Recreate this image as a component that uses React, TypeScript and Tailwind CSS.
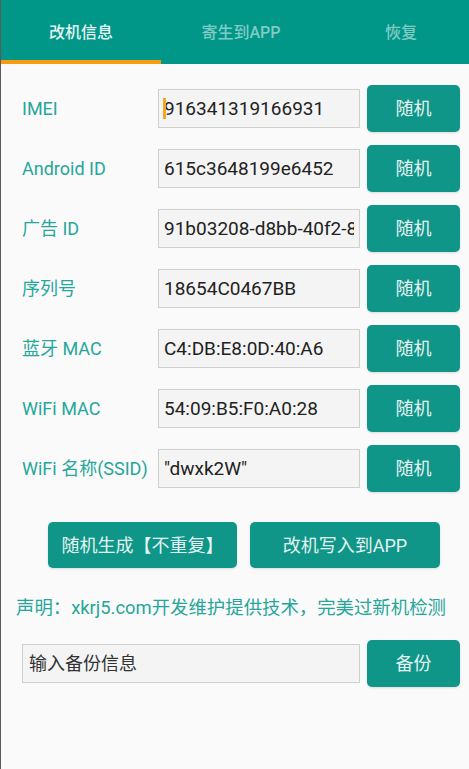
const fields = [
  { label: "IMEI", value: "916341319166931", caret: true },
  { label: "Android ID", value: "615c3648199e6452" },
  { label: "广告 ID", value: "91b03208-d8bb-40f2-8a3c-6f1e2d9b7c45" },
  { label: "序列号", value: "18654C0467BB" },
  { label: "蓝牙 MAC", value: "C4:DB:E8:0D:40:A6" },
  { label: "WiFi MAC", value: "54:09:B5:F0:A0:28" },
  { label: "WiFi 名称(SSID)", value: '"dwxk2W"' },
];

const tabs = ["改机信息", "寄生到APP", "恢复"];

function App() {
  return (
    <div
      className="min-h-[769px] w-[469px] overflow-hidden bg-[#fafafa] border-l border-[#5a5a5a]"
      style={{ fontFamily: 'Roboto, "Noto Sans CJK SC", sans-serif' }}
    >
      {/* tab bar */}
      <div className="flex h-16 bg-[#009688] overflow-hidden">
        {tabs.map((tab, i) => (
          <div
            key={tab}
            className={
              "relative flex h-full w-[160px] shrink-0 items-center justify-center pt-[2px] text-[16px] font-medium " +
              (i === 0 ? "text-[#e6f4f2]" : "text-[#80cbc4]")
            }
          >
            {tab}
            {i === 0 && (
              <span className="absolute bottom-0 left-0 h-1 w-full bg-[#f59c12]" />
            )}
          </div>
        ))}
      </div>

      <div className="pt-[14px]">
        {fields.map((f) => (
          <div key={f.label} className="flex h-[60px] items-center pl-[21px]">
            <span className="w-[136px] whitespace-nowrap text-[18px] text-[#26a69a]">
              {f.label}
            </span>
            <div className="relative">
              <input
                readOnly
                value={f.value}
                className="h-[39px] w-[202px] border border-[#cfcfcf] bg-[#f4f4f4] px-[5px] text-[19px] text-[#222] outline-none"
              />
              {f.caret && (
                <span className="absolute left-[5px] top-[9px] h-[21px] w-[3px] bg-[#f5a623]" />
              )}
            </div>
            <button className="ml-[7px] h-[47px] w-[93px] rounded-[5px] bg-[#0f9688] text-[18px] text-[#e4f3f1] shadow-sm">
              随机
            </button>
          </div>
        ))}
      </div>

      <div className="mt-6 flex gap-[13px] pl-[47px]">
        <button className="h-[46px] w-[189px] rounded-[5px] bg-[#0f9688] text-[18px] text-[#e4f3f1] shadow-sm">
          随机生成【不重复】
        </button>
        <button className="h-[46px] w-[190px] rounded-[5px] bg-[#0f9688] text-[18px] text-[#e4f3f1] shadow-sm">
          改机写入到APP
        </button>
      </div>

      <p className="mt-[28px] whitespace-nowrap pl-[15px] text-[18.4px] leading-[24px] text-[#26a69a]">
        声明：xkrj5.com开发维护提供技术，完美过新机检测
      </p>

      <div className="mt-[20px] flex items-center pl-[21px]">
        <input
          placeholder="输入备份信息"
          className="h-[39px] w-[338px] border border-[#cfcfcf] bg-[#f4f4f4] px-[6px] text-[18px] text-[#222] outline-none placeholder:text-[#333]"
        />
        <button className="ml-[7px] h-[47px] w-[93px] rounded-[5px] bg-[#0f9688] text-[18px] text-[#e4f3f1] shadow-sm">
          备份
        </button>
      </div>
    </div>
  );
}

export default App;
